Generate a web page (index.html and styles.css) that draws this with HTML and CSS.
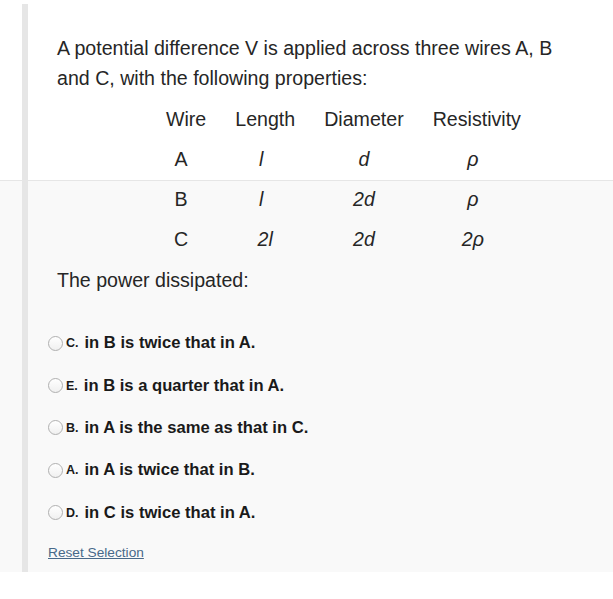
FILE: index.html
```html
<!DOCTYPE html>
<html lang="en">
<head>
<meta charset="utf-8">
<title>Question</title>
<link rel="stylesheet" href="styles.css">
</head>
<body>
<div class="card">
  <p class="question">A potential difference V is applied across three wires A, B and C, with the following properties:</p>
  <div class="props">
    <span class="h">Wire</span><span class="h">Length</span><span class="h">Diameter</span><span class="h">Resistivity</span>
    <span class="w">A</span><span class="v v-l">l</span><span class="v">d</span><span class="v v-r">ρ</span>
    <span class="w">B</span><span class="v v-l">l</span><span class="v">2d</span><span class="v v-r">ρ</span>
    <span class="w">C</span><span class="v">2l</span><span class="v">2d</span><span class="v v-r">2ρ</span>
  </div>
  <p class="stem">The power dissipated:</p>
  <div class="options">
    <label class="option"><span class="radio"></span><span class="key">C.</span><span class="text">in B is twice that in A.</span></label>
    <label class="option"><span class="radio"></span><span class="key">E.</span><span class="text">in B is a quarter that in A.</span></label>
    <label class="option"><span class="radio"></span><span class="key">B.</span><span class="text">in A is the same as that in C.</span></label>
    <label class="option"><span class="radio"></span><span class="key">A.</span><span class="text">in A is twice that in B.</span></label>
    <label class="option"><span class="radio"></span><span class="key">D.</span><span class="text">in C is twice that in A.</span></label>
  </div>
  <a class="reset" href="#">Reset Selection</a>
</div>
</body>
</html>
```

FILE: styles.css
```css
html, body {
  margin: 0;
  padding: 0;
}
body {
  width: 613px;
  height: 599px;
  overflow: hidden;
  font-family: "Liberation Sans", Arial, Helvetica, sans-serif;
  color: #262626;
  background: linear-gradient(to bottom,
    #ffffff 0, #ffffff 180px,
    #e6e6e6 180px, #e6e6e6 181px,
    #f9f9f9 181px, #f9f9f9 572px,
    #ffffff 572px, #ffffff 100%);
}
.card {
  margin: 4px 0 0 22px;
  height: 568px;
  box-sizing: border-box;
  border-left: 6px solid #e6e6e6;
  padding: 29px 0 0 20px;
}
.question {
  margin: 0 0 0 9px;
  width: 520px;
  font-size: 19.6px;
  line-height: 30px;
}
.props {
  display: grid;
  grid-template-columns: auto auto auto auto;
  grid-auto-rows: 40px;
  column-gap: 29px;
  justify-content: start;
  justify-items: center;
  align-items: center;
  margin: 6px 0 0 118px;
  font-size: 19.6px;
}
.props .w {
  margin-right: 10px;
}
.props .v {
  font-style: italic;
}
.props .v-l {
  margin-right: 8px;
}
.props .v-r {
  margin-right: 8px;
}
.stem {
  margin: 6px 0 0 9px;
  font-size: 19.6px;
  line-height: 30px;
}
.options {
  display: flex;
  flex-direction: column;
  margin-top: 27px;
}
.option {
  display: flex;
  align-items: center;
  height: 42.4px;
  color: #1a1a1a;
  font-weight: bold;
}
.radio {
  width: 13px;
  height: 13px;
  border: 1px solid #b0b0b0;
  border-radius: 50%;
  background: linear-gradient(#ffffff, #f0f0f0);
  margin-right: 3px;
  flex: none;
}
.key {
  font-size: 12.5px;
  margin-right: 6px;
}
.text {
  font-size: 16.6px;
}
.reset {
  display: inline-block;
  margin-top: 9px;
  font-size: 13.7px;
  line-height: 20px;
  color: #48698a;
  text-decoration: underline;
}
```
